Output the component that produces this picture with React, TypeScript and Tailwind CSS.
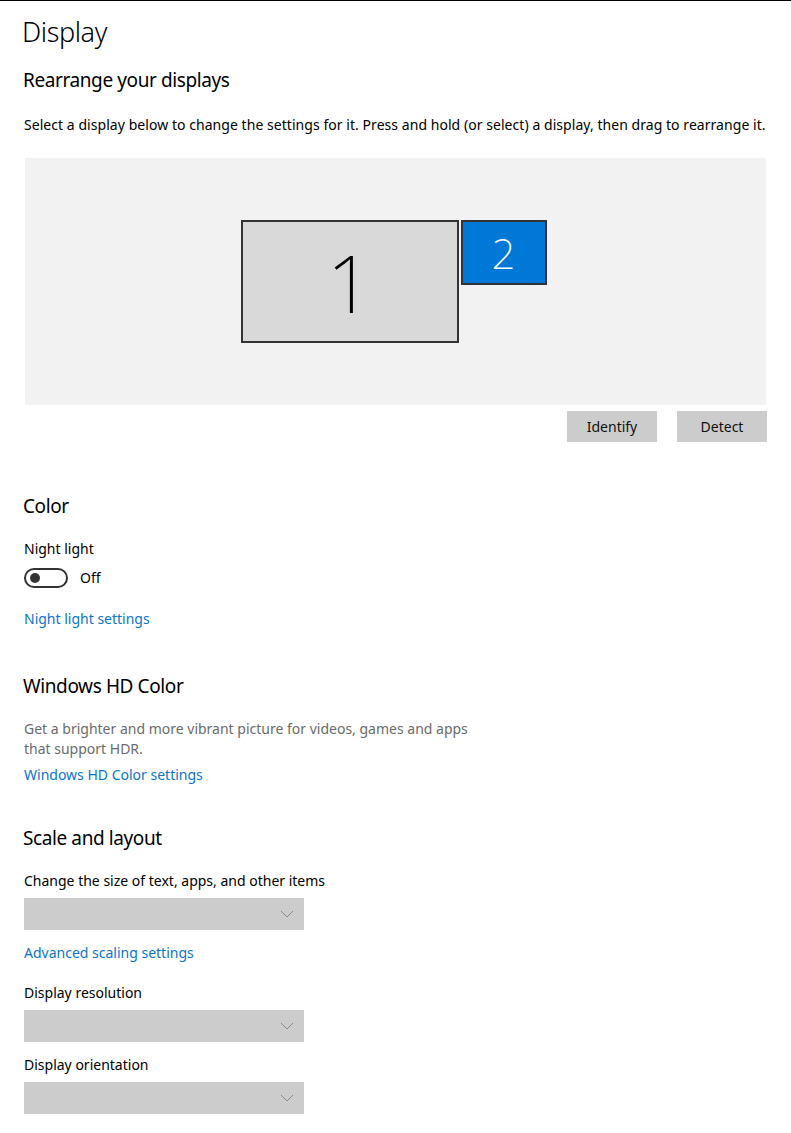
import React from 'react';

const font = { fontFamily: '"Noto Sans", "Open Sans", sans-serif' };

const Chevron: React.FC = () => (
  <svg width="14" height="8" viewBox="0 0 14 8" fill="none">
    <path d="M1 1l6 6 6-6" stroke="#8a8a8a" strokeWidth="1" />
  </svg>
);

const Dropdown: React.FC = () => (
  <div className="w-[280px] h-[32px] bg-[#cccccc] flex items-center justify-end pr-[10px]">
    <Chevron />
  </div>
);

const Link: React.FC<{ children: React.ReactNode }> = ({ children }) => (
  <a className="text-[14px] text-[#0a74d0] leading-[20px] cursor-pointer">{children}</a>
);

const heading = 'text-[19px] leading-[28px] tracking-[-0.4px]';

const App: React.FC = () => {
  const [night, setNight] = React.useState(false);

  return (
    <div className="min-h-screen w-full bg-white text-black border-t border-black" style={font}>
      <div className="pl-[22px] pr-[24px]">
        <h1 className="text-[27px] font-light leading-[36px] tracking-[-0.4px] pt-[13px]">Display</h1>

        <h2 className={`${heading} mt-[16px] ml-[1px]`}>Rearrange your displays</h2>
        <p className="text-[14px] leading-[20px] mt-[21px] ml-[2px] tracking-[0.05px] whitespace-nowrap">
          Select a display below to change the settings for it. Press and hold (or select) a display, then drag to rearrange it.
        </p>

        {/* display arrangement canvas */}
        <div className="ml-[3px] mr-[1px] mt-[23px] h-[247px] bg-[#f2f2f2] flex justify-center items-start pt-[62px] pr-[4px] gap-[2px]">
          <div className="w-[218px] h-[123px] bg-[#d9d9d9] border-2 border-[#333333] flex items-center justify-center">
            <span className="text-[80px] font-extralight leading-none text-black">1</span>
          </div>
          <div className="w-[86px] h-[65px] bg-[#0078d7] border-2 border-[#333333] flex items-center justify-center">
            <span className="text-[42px] font-extralight leading-none text-white">2</span>
          </div>
        </div>
        <div className="flex justify-end gap-[20px] mt-[6px]">
          <button className="w-[90px] h-[31px] bg-[#cccccc] text-[14px] text-[#111]">Identify</button>
          <button className="w-[90px] h-[31px] bg-[#cccccc] text-[14px] text-[#111]">Detect</button>
        </div>

        <div className="ml-[1px]">
          <h2 className={`${heading} mt-[50px]`}>Color</h2>
          <div className="text-[14px] leading-[20px] mt-[19px] ml-[1px]">Night light</div>
          <div className="flex items-center gap-[12px] mt-[8px] ml-[1px]">
            <button
              onClick={() => setNight(!night)}
              className="w-[44px] h-[20px] rounded-full border-2 border-[#333333] flex items-center px-[4px]"
            >
              <span className="w-[10px] h-[10px] rounded-full bg-[#333333]" />
            </button>
            <span className="text-[14px]">Off</span>
          </div>
          <div className="mt-[18px] ml-[1px]"><Link>Night light settings</Link></div>

          <h2 className={`${heading} mt-[42px]`}>Windows HD Color</h2>
          <p className="text-[14px] leading-[20px] text-[#6b6b6b] mt-[19px] ml-[1px] w-[460px]">
            Get a brighter and more vibrant picture for videos, games and apps that support HDR.
          </p>
          <div className="mt-[3px] ml-[1px]"><Link>Windows HD Color settings</Link></div>

          <h2 className={`${heading} mt-[38px]`}>Scale and layout</h2>
          <div className="ml-[1px]">
            <div className="text-[14px] leading-[20px] mt-[19px]">Change the size of text, apps, and other items</div>
            <div className="mt-[7px]"><Dropdown /></div>
            <div className="mt-[10px]"><Link>Advanced scaling settings</Link></div>
            <div className="text-[14px] leading-[20px] mt-[19px]">Display resolution</div>
            <div className="mt-[7px]"><Dropdown /></div>
            <div className="text-[14px] leading-[20px] mt-[13px]">Display orientation</div>
            <div className="mt-[7px]"><Dropdown /></div>
          </div>
        </div>
      </div>
    </div>
  );
};

export default App;
